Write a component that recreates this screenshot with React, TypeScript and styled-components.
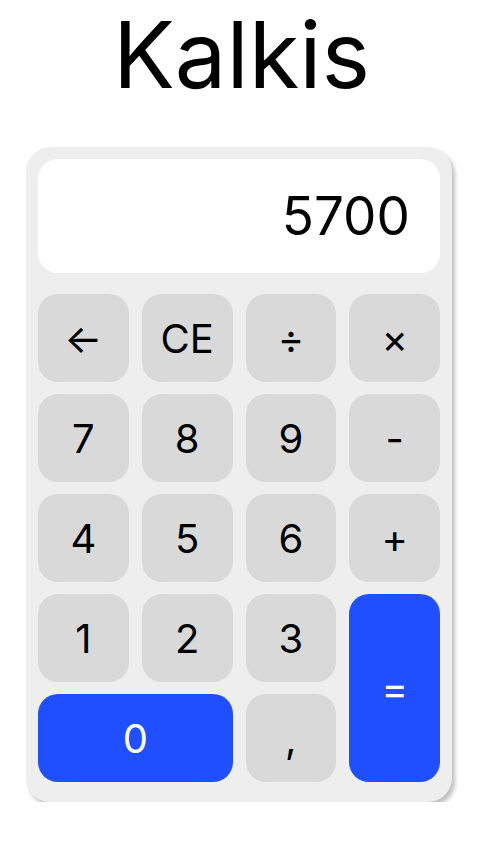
import styled, { createGlobalStyle } from 'styled-components';

const GlobalStyle = createGlobalStyle`
  body {
    margin: 0;
    background: #ffffff;
    font-family: Inter, "Noto Sans", sans-serif;
  }
`;

const Page = styled.div`
  padding-top: 4px;
`;

const Title = styled.h1`
  margin: 0 0 42px;
  font-size: 92px;
  line-height: 1.1;
  font-weight: 400;
  text-align: center;
  color: #000;
`;

const Panel = styled.div`
  width: 426px;
  margin-left: 26px;
  box-sizing: border-box;
  padding: 12px 12px 20px;
  background: #eeeeee;
  border-radius: 24px;
  box-shadow: 3px 4px 4px rgba(0, 0, 0, 0.25);
`;

const Display = styled.div`
  height: 114px;
  background: #ffffff;
  border-radius: 20px;
  display: flex;
  align-items: center;
  justify-content: flex-end;
  padding-right: 30px;
  font-size: 53px;
  color: #000;
`;

const Keys = styled.div`
  margin-top: 21px;
  display: grid;
  grid-template-columns: repeat(4, 1fr);
  grid-auto-rows: 88px;
  gap: 12px 13px;
`;

const Key = styled.button<{ $blue?: boolean; $wide?: boolean; $tall?: boolean }>`
  border: none;
  border-radius: 20px;
  font-family: Inter, "Noto Sans", sans-serif;
  font-size: 40px;
  display: flex;
  align-items: center;
  justify-content: center;
  padding: 0;
  background: ${(p) => (p.$blue ? '#1f4fff' : '#d9d9d9')};
  color: ${(p) => (p.$blue ? '#ffffff' : '#000000')};
  grid-column: ${(p) => (p.$wide ? 'span 2' : 'auto')};
  grid-row: ${(p) => (p.$tall ? 'span 2' : 'auto')};
`;

const keys: { label: string; blue?: boolean; wide?: boolean; tall?: boolean }[] = [
  { label: '←' },
  { label: 'CE' },
  { label: '÷' },
  { label: '×' },
  { label: '7' },
  { label: '8' },
  { label: '9' },
  { label: '-' },
  { label: '4' },
  { label: '5' },
  { label: '6' },
  { label: '+' },
  { label: '1' },
  { label: '2' },
  { label: '3' },
  { label: '=', blue: true, tall: true },
  { label: '0', blue: true, wide: true },
  { label: ',' },
];

export default function App() {
  return (
    <Page>
      <GlobalStyle />
      <Title>Kalkis</Title>
      <Panel>
        <Display>5700</Display>
        <Keys>
          {keys.map((k) => (
            <Key key={k.label} $blue={k.blue} $wide={k.wide} $tall={k.tall}>
              {k.label}
            </Key>
          ))}
        </Keys>
      </Panel>
    </Page>
  );
}
